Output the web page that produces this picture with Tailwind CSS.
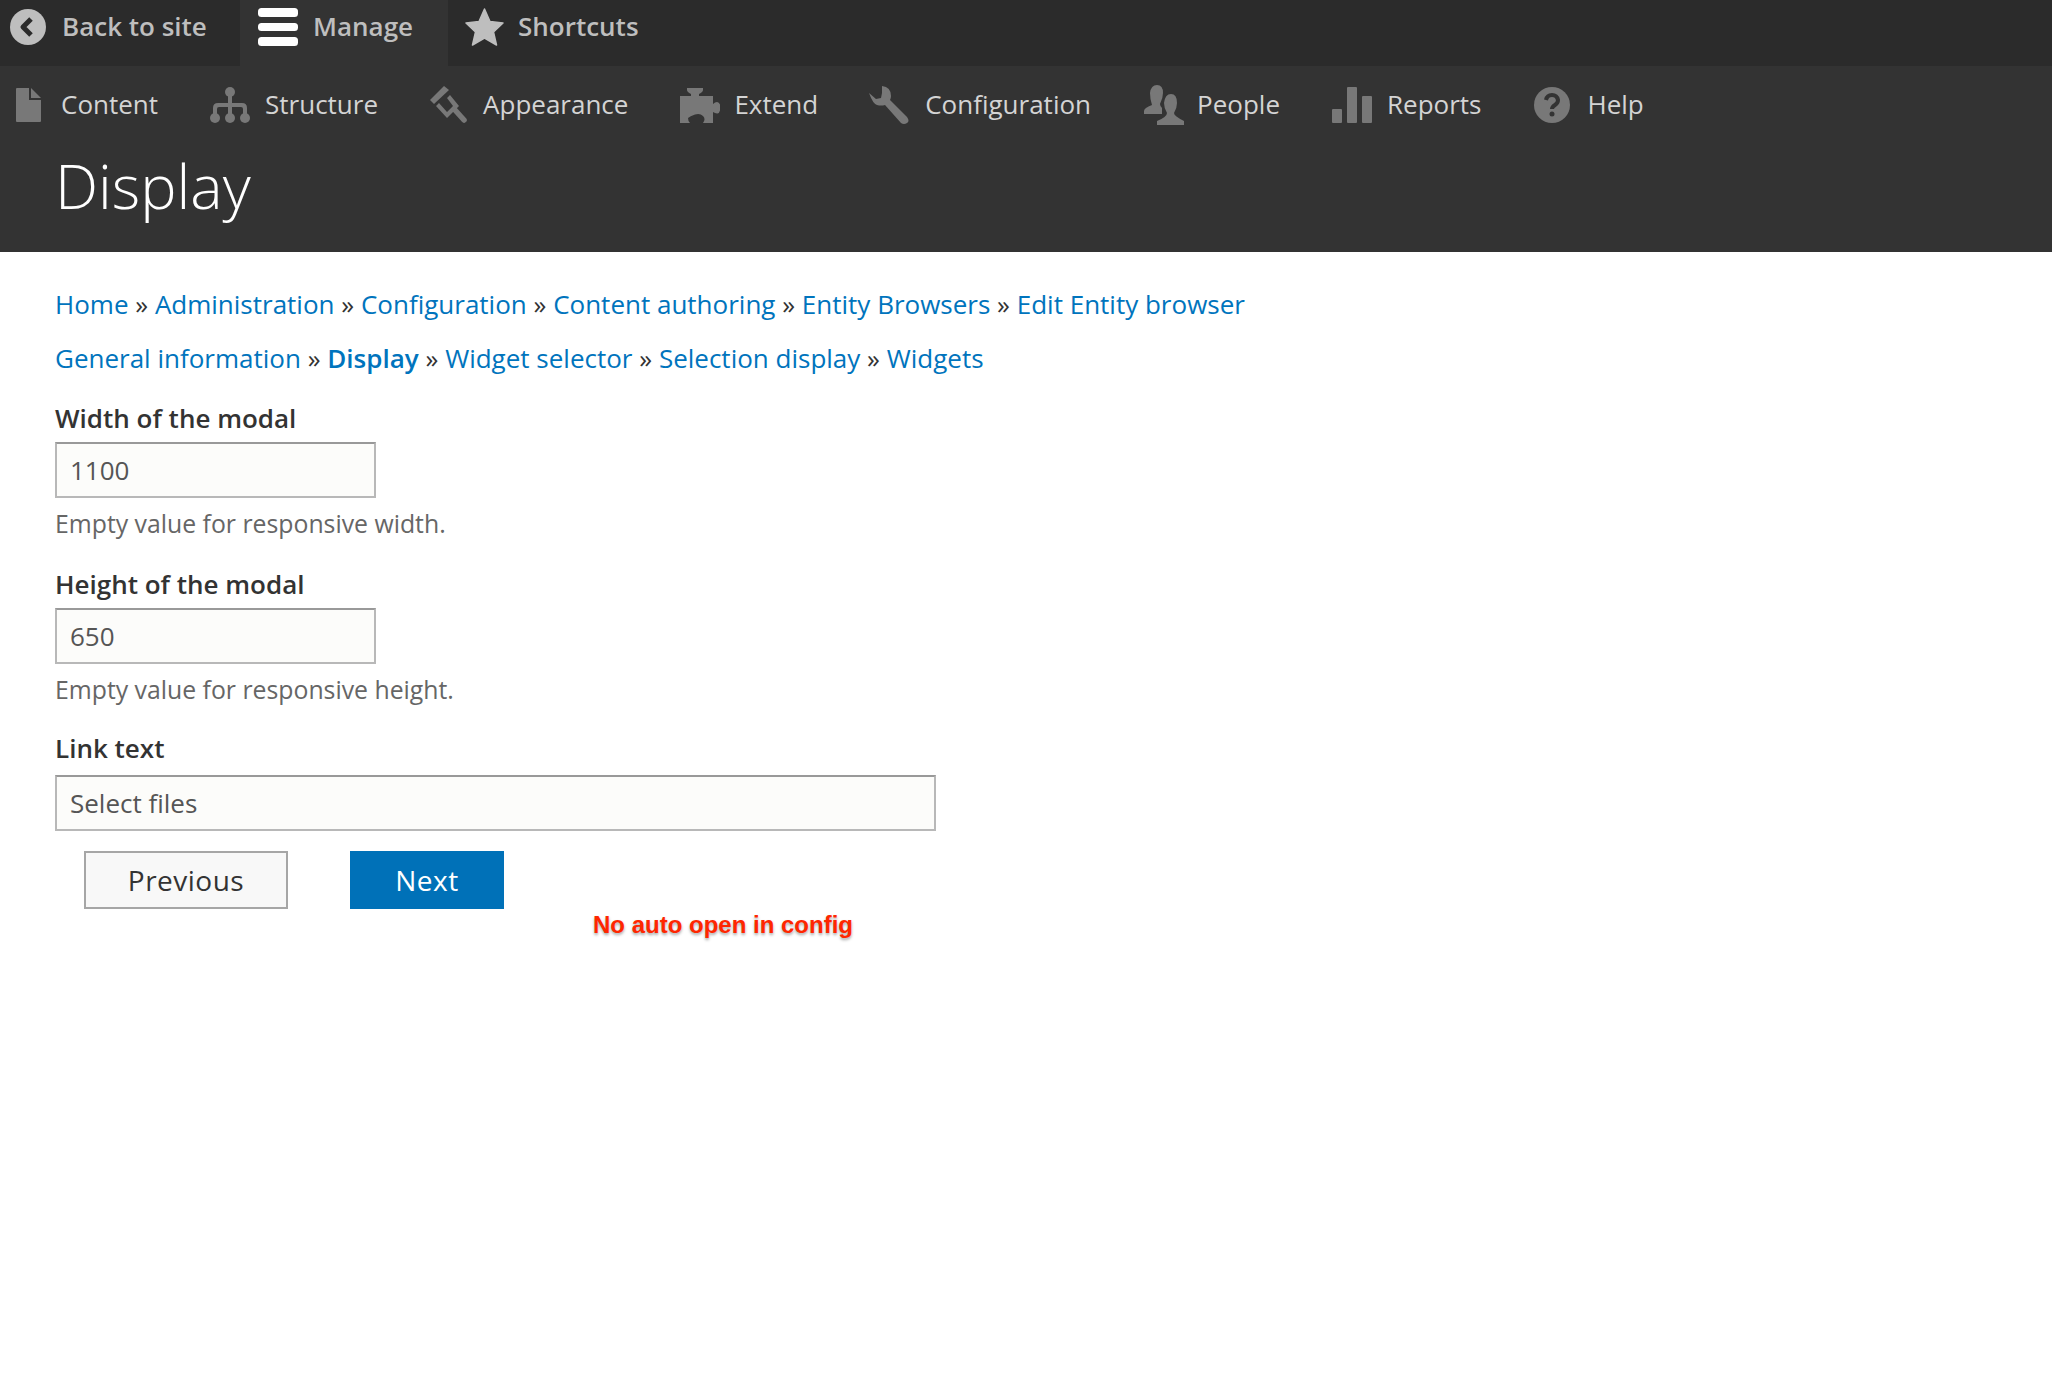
<!DOCTYPE html>
<html><head><meta charset="utf-8"><script src="https://cdn.jsdelivr.net/npm/@tailwindcss/browser@4"></script></head>
<body class="bg-white font-['Open_Sans',sans-serif] text-[#333]">
<div class="relative h-[1384px] overflow-hidden">
<header class="bg-[#333]">
  <nav class="flex h-[66px] bg-[#2b2b2b] text-[26px] font-semibold text-[#bebebe]">
    <a class="flex w-[240px] items-center gap-[16px] pb-[12px] pl-[10px]">
      <svg class="h-[36px] w-[36px]" viewBox="0 0 36 36"><circle cx="18" cy="18" r="18" fill="#bebebe"/><path d="M21 10l-8 8 8 8" fill="none" stroke="#2b2b2b" stroke-width="5" stroke-linejoin="round"/></svg>
      <span class="mb-[2px]">Back to site</span></a>
    <a class="flex w-[208px] items-center gap-[15px] bg-[#333] pb-[12px] pl-[18px]">
      <svg class="h-[38px] w-[40px]" viewBox="0 0 40 38"><rect width="40" height="9" rx="3.500" fill="#fff"/><rect y="15" width="40" height="8" rx="3.500" fill="#fff"/><rect y="29" width="40" height="9" rx="3.500" fill="#fff"/></svg>
      <span class="mb-[2px]">Manage</span></a>
    <a class="flex items-center gap-[14px] pb-[12px] pl-[17px]">
      <svg class="h-[38px] w-[39px]" viewBox="0 0 39 38"><path d="M19.500 1l5.500 12.500 13 1.500-9.500 9 3 13-12-7-12 7 3-13L1 15l13-1.500z" fill="#bebebe" stroke="#bebebe" stroke-width="1.500" stroke-linejoin="round"/></svg>
      <span class="mb-[2px]">Shortcuts</span></a>
  </nav>
  <nav class="flex h-[68px] items-center pt-[10px] text-[26px] text-[#d4d4d4]">
    <a class="ml-[16px] flex items-center gap-[20px]"><svg class="h-[34px] w-[25px]" viewBox="0 0 25 34"><path d="M0 1q0-1 1-1h12v12h12v21q0 1-1 1H1q-1 0-1-1z" fill="#787878"/><path d="M15 0l10 10H15z" fill="#787878"/></svg><span class="mb-[2px]">Content</span></a>
    <a class="ml-[52px] flex items-center gap-[15px]"><svg class="h-[36px] w-[40px]" viewBox="0 0 40 36"><g fill="#787878"><circle cx="20" cy="5" r="5"/><rect x="18" y="8" width="4" height="20"/><path d="M3 28v-7q0-5 5-5h24q5 0 5 5v7h-4v-6q0-2-2-2H9q-2 0-2 2v6z"/><circle cx="5" cy="31" r="5"/><circle cx="20" cy="31" r="5"/><circle cx="35" cy="31" r="5"/></g></svg><span class="mb-[2px]">Structure</span></a>
    <a class="ml-[52px] flex items-center gap-[15px]"><svg class="h-[38px] w-[38px]" viewBox="0 0 38 38"><g fill="#787878"><path d="M14 0L0 14l4 4L19 4z"/><path d="M6 20l3-3 8 9 6-6-6-8 3-3 9 11-12 12z"/></g><path d="M25 24l9 10" stroke="#787878" stroke-width="5.500" stroke-linecap="round"/></svg><span class="mb-[2px]">Appearance</span></a>
    <a class="ml-[52px] flex items-center gap-[14px]"><svg class="h-[35px] w-[40px]" viewBox="0 0 40 35"><path d="M0 8h11V6Q7 4 7 2V0h16v2q0 2-4 4v2h14v8q2-2 4-2t3 2.500 0 6-3 3-4-1.500v11H23q3-4 0-7t-8-1.500-7 3.500q0 3 2 5H0z" fill="#787878"/></svg><span class="mb-[2px]">Extend</span></a>
    <a class="ml-[51px] flex items-center gap-[16px]"><svg class="h-[38px] w-[40px]" viewBox="0 0 40 38"><path d="M13 0q9 1 9 10 0 2-1 4l17 17q3 4 0 6t-6 0L16 19q-4 1-8 0T0 7l7 6 5-1 1-5z" fill="#787878"/></svg><span class="mb-[2px]">Configuration</span></a>
    <a class="ml-[53px] flex items-center gap-[13px]"><svg class="h-[40px] w-[40px]" viewBox="0 0 40 40"><g fill="#787878"><path d="M13 0q6 0 6 8 0 5-3 11 0 2 2 4v6H0v-3q0-3 8-6-2-6-2-12 1-8 7-8z"/><path d="M27 9q6 0 6 9 0 5-3 10 0 3 10 8v4H13v-4q10-4 10-8-3-5-3-10 1-9 7-9z"/></g></svg><span class="mb-[2px]">People</span></a>
    <a class="ml-[52px] flex items-center gap-[15px]"><svg class="h-[36px] w-[40px]" viewBox="0 0 40 36"><g fill="#787878"><rect y="22" width="10" height="14" rx="1"/><rect x="15" width="10" height="36" rx="1"/><rect x="30" y="9" width="10" height="27" rx="1"/></g></svg><span class="mb-[2px]">Reports</span></a>
    <a class="ml-[53px] flex items-center gap-[17px]"><svg class="h-[36px] w-[36px]" viewBox="0 0 36 36"><circle cx="18" cy="18" r="18" fill="#787878"/><path d="M12 13q1-5 6-5t6 5q0 3-3 5t-3 4" fill="none" stroke="#333" stroke-width="4"/><circle cx="18" cy="27" r="2.500" fill="#333"/></svg><span class="mb-[2px]">Help</span></a>
  </nav>
  <div class="flex h-[118px] items-start pt-[12px] pl-[55px]"><h1 class="text-[61px] leading-[80px] font-light text-white">Display</h1></div>
</header>
<main class="px-[55px] text-[26px]">
  <div class="pt-[34px] leading-[36px] text-[#0074bd]">
    <p>Home <span class="text-[#333]">»</span> Administration <span class="text-[#333]">»</span> Configuration <span class="text-[#333]">»</span> Content authoring <span class="text-[#333]">»</span> Entity Browsers <span class="text-[#333]">»</span> Edit Entity browser</p>
    <p class="mt-[18px]">General information <span class="text-[#333]">»</span> <b class="font-semibold">Display</b> <span class="text-[#333]">»</span> Widget selector <span class="text-[#333]">»</span> Selection display <span class="text-[#333]">»</span> Widgets</p>
  </div>
  <label class="mt-[24px] block leading-[36px] font-semibold">Width of the modal</label>
  <div class="mt-[6px] flex h-[56px] w-[321px] items-center border-2 border-[#b8b8b8] border-t-[#999] bg-[#fcfcfa] pl-[13px] text-[#555]">1100</div>
  <p class="mt-[7px] text-[24.800px] leading-[36px] text-[#666]">Empty value for responsive width.</p>
  <label class="mt-[25px] block leading-[36px] font-semibold">Height of the modal</label>
  <div class="mt-[6px] flex h-[56px] w-[321px] items-center border-2 border-[#b8b8b8] border-t-[#999] bg-[#fcfcfa] pl-[13px] text-[#555]">650</div>
  <p class="mt-[7px] text-[24.800px] leading-[36px] text-[#666]">Empty value for responsive height.</p>
  <label class="mt-[23px] block leading-[36px] font-semibold">Link text</label>
  <div class="mt-[9px] flex h-[56px] w-[881px] items-center border-2 border-[#b8b8b8] border-t-[#999] bg-[#fcfcfa] pl-[13px] text-[#555]">Select files</div>
  <div class="mt-[20px] ml-[29px] flex gap-[62px]">
    <button class="h-[58px] w-[204px] border-2 border-[#a6a6a6] bg-[#f8f8f8] text-[28px] tracking-[0.5px] text-[#333]">Previous</button>
    <button class="h-[58px] w-[154px] bg-[#0071b8] text-[28px] tracking-[0.5px] text-white">Next</button>
  </div>
</main>
<div class="absolute left-[593px] top-[909px] font-['Liberation_Sans',sans-serif] text-[24px] leading-[32px] font-bold text-[#ff2600] [text-shadow:0_2px_3px_rgba(0,0,0,0.35)]">No auto open in config</div>
</div>
</body></html>
